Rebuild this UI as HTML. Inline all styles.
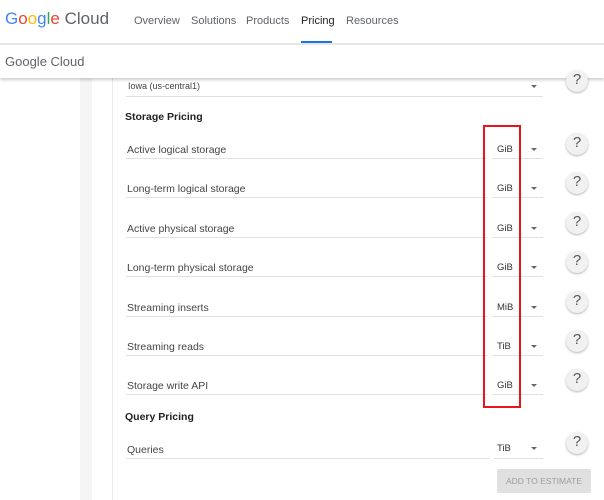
<!DOCTYPE html>
<html><head><style>
*{margin:0;padding:0;box-sizing:border-box}
body{width:604px;height:500px;overflow:hidden;background:#fff;font-family:"Liberation Sans",Arial,sans-serif;position:relative;color:#3c4043}
.a{position:absolute}
.lbl{position:absolute;left:127px;font-size:10.5px;color:#444}
.ul{position:absolute;left:126px;width:361px;height:1px;background:#e0e0e0}
.unit{position:absolute;left:497px;font-size:9.5px;color:#333}
.uul{position:absolute;left:492px;width:51px;height:1px;background:#e0e0e0}
.car{position:absolute;left:531px;width:0;height:0;border-left:3.5px solid transparent;border-right:3.5px solid transparent;border-top:3.5px solid #666}
.q{position:absolute;left:566px;width:22px;height:22px;border-radius:50%;background:#f1f1f1;box-shadow:0 1px 2px rgba(0,0,0,.3);text-align:center;font-size:15px;line-height:20px;color:#555}
</style></head><body>
<div class="a" style="left:0;top:0;width:604px;height:43px;background:#fff"></div>
<div class="a" style="left:5px;top:9px;font-size:17px"><span style="color:#4285f4">G</span><span style="color:#ea4335">o</span><span style="color:#fbbc05">o</span><span style="color:#4285f4">g</span><span style="color:#34a853">l</span><span style="color:#ea4335">e</span> <span style="color:#5f6368">Cloud</span></div>
<div class="a" style="top:15px;left:134px;font-size:11px;color:#5f6368">Overview</div>
<div class="a" style="top:15px;left:191px;font-size:11px;color:#5f6368">Solutions</div>
<div class="a" style="top:15px;left:246px;font-size:11px;color:#5f6368">Products</div>
<div class="a" style="top:15px;left:301px;font-size:11px;color:#202124">Pricing</div>
<div class="a" style="top:15px;left:346px;font-size:11px;color:#5f6368">Resources</div>
<div class="a" style="left:301px;top:41px;width:31px;height:2px;background:#1a73e8"></div>
<div class="a" style="left:0;top:43px;width:604px;height:2px;background:#e8e8e8"></div>
<div class="a" style="left:80px;top:78px;width:12px;height:422px;background:#f5f5f5"></div>
<div class="a" style="left:112px;top:78px;width:1px;height:422px;background:#eaeaea"></div>
<div class="a" style="left:0;top:45px;width:604px;height:33px;background:#fff;box-shadow:0 2px 3px rgba(0,0,0,.2)"></div>
<div class="a" style="left:5px;top:54px;font-size:13px;color:#5f6368">Google Cloud</div>
<div class="a" style="left:128px;top:81px;font-size:9px;color:#444">Iowa (us-central1)</div>
<div class="a" style="left:126px;top:96px;width:417px;height:1px;background:#e0e0e0"></div>
<div class="car" style="top:85px"></div>
<div class="q" style="top:70px">?</div>
<div class="a" style="left:125px;top:111px;font-size:10.5px;font-weight:bold;color:#202124">Storage Pricing</div>

<div class="lbl" style="top:144px">Active logical storage</div><div class="ul" style="top:158px"></div><div class="unit" style="top:144px">GiB</div><div class="uul" style="top:158px"></div><div class="car" style="top:148px"></div><div class="q" style="top:133px">?</div>
<div class="lbl" style="top:183px">Long-term logical storage</div><div class="ul" style="top:197px"></div><div class="unit" style="top:183px">GiB</div><div class="uul" style="top:197px"></div><div class="car" style="top:187px"></div><div class="q" style="top:172px">?</div>
<div class="lbl" style="top:223px">Active physical storage</div><div class="ul" style="top:237px"></div><div class="unit" style="top:223px">GiB</div><div class="uul" style="top:237px"></div><div class="car" style="top:227px"></div><div class="q" style="top:212px">?</div>
<div class="lbl" style="top:262px">Long-term physical storage</div><div class="ul" style="top:276px"></div><div class="unit" style="top:262px">GiB</div><div class="uul" style="top:276px"></div><div class="car" style="top:266px"></div><div class="q" style="top:251px">?</div>
<div class="lbl" style="top:302px">Streaming inserts</div><div class="ul" style="top:316px"></div><div class="unit" style="top:302px">MiB</div><div class="uul" style="top:316px"></div><div class="car" style="top:306px"></div><div class="q" style="top:291px">?</div>
<div class="lbl" style="top:341px">Streaming reads</div><div class="ul" style="top:355px"></div><div class="unit" style="top:341px">TiB</div><div class="uul" style="top:355px"></div><div class="car" style="top:345px"></div><div class="q" style="top:330px">?</div>
<div class="lbl" style="top:380px">Storage write API</div><div class="ul" style="top:394px"></div><div class="unit" style="top:380px">GiB</div><div class="uul" style="top:394px"></div><div class="car" style="top:384px"></div><div class="q" style="top:369px">?</div>

<div class="a" style="left:483px;top:125px;width:38px;height:283px;border:2px solid #e8141e"></div>

<div class="a" style="left:125px;top:411px;font-size:10.5px;font-weight:bold;color:#202124">Query Pricing</div>
<div class="lbl" style="top:444px">Queries</div><div class="a" style="left:126px;top:458px;width:363px;height:1px;background:#e0e0e0"></div><div class="unit" style="top:443px">TiB</div><div class="a" style="left:494px;top:458px;width:49px;height:1px;background:#e0e0e0"></div><div class="car" style="top:447px"></div><div class="q" style="top:432px">?</div>
<div class="a" style="left:497px;top:469px;width:94px;height:24px;background:#e0e0e0;border-radius:2px;font-size:8.5px;color:#9e9e9e;text-align:center;line-height:24px">ADD TO ESTIMATE</div>
</body></html>
